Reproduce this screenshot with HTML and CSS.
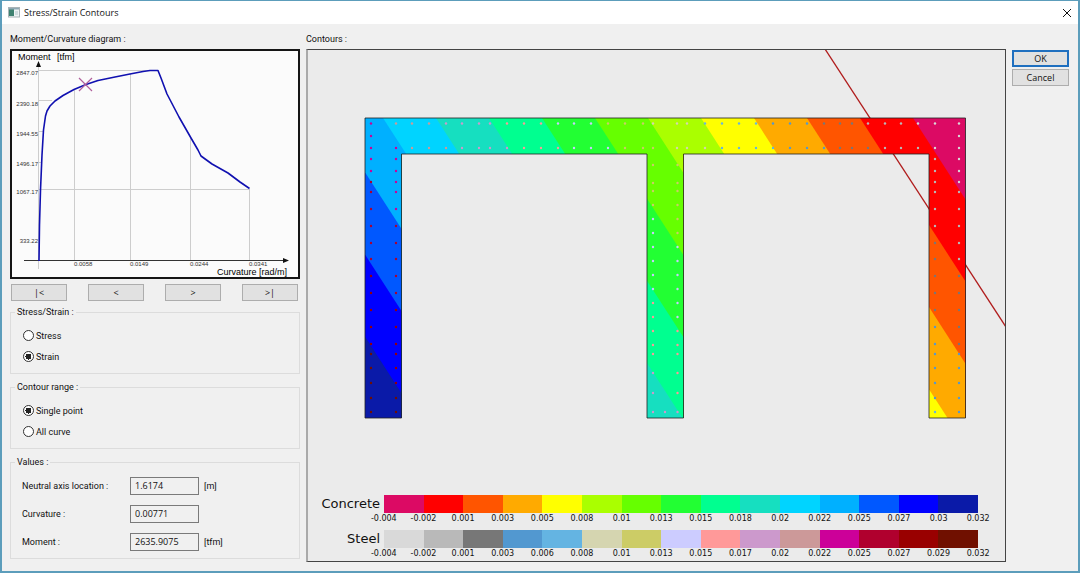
FILE: index.html
```html
<!DOCTYPE html>
<html lang="en">
<head>
<meta charset="utf-8">
<title>Stress/Strain Contours</title>
<link rel="stylesheet" href="styles.css">
</head>
<body>
<div class="window">
  <header class="titlebar">
    <svg class="app-icon" viewBox="0 0 12 11" aria-hidden="true">
      <rect x="0.5" y="0.5" width="11" height="9.5" fill="#eef3f4" stroke="#a9b4b8"/>
      <rect x="1" y="1" width="5" height="8" fill="#3f8271"/>
      <rect x="1" y="1" width="10" height="1.5" fill="#8fa9b5"/>
      <rect x="7" y="4" width="3" height="4" fill="#cfdcdf"/>
    </svg>
    <h1 class="title">Stress/Strain Contours</h1>
    <button class="close" type="button" aria-label="Close">
      <svg viewBox="0 0 10 10" aria-hidden="true"><path d="M1 1L9 9M9 1L1 9" stroke="#111" fill="none"/></svg>
    </button>
  </header>

  <main class="content">
    <section class="side">
      <h2 class="caption">Moment/Curvature diagram :</h2>
      <div class="chart">
        <svg viewBox="12 51 286 226" role="img" aria-label="Moment curvature diagram">
          <g stroke="#cdcdcd" fill="none">
            <path d="M38.5 70.5H158M38.5 100.5H52M38.5 131.5H43M38.5 162.5H41M38.5 189.5H249.5"/>
            <path d="M74.5 89V261M130.5 74V261M190.5 137V261M249.5 189V261M38.5 64V269"/>
          </g>
          <path d="M24 260.5H284" stroke="#333" fill="none"/>
          <path d="M36 67L38.500 61L41 67ZM283 258L289 260.500L283 263Z" fill="#111"/>
          <path class="curve" d="M39 261L39.500 225L40.500 190L42 155L43.500 130L45.500 116L47 111L50 106L55 101L63 95.500L74 89.500L86 84.500L98 80.500L115 77L130 74L143 71.500L150 70.500L158 70.500L161 78L167 94L179 117L191 138L198 150L201 156L212 164L228 173L240 182L249.500 188.500"/>
          <path class="marker" d="M79 78L92 91M92 78L79 91"/>
          <g class="axis-name">
            <text x="18" y="60">Moment</text>
            <text x="57" y="60">[tfm]</text>
            <text x="287" y="275" text-anchor="end">Curvature [rad/m]</text>
          </g>
          <g class="tick" text-anchor="end">
            <text x="38" y="75">2847.07</text>
            <text x="38" y="106">2390.18</text>
            <text x="38" y="136">1944.55</text>
            <text x="38" y="166">1496.17</text>
            <text x="38" y="194">1067.17</text>
            <text x="38" y="243">333.22</text>
          </g>
          <g class="tick">
            <text x="74" y="266">0.0058</text>
            <text x="130" y="266">0.0149</text>
            <text x="190" y="266">0.0244</text>
            <text x="249" y="266">0.0341</text>
          </g>
        </svg>
      </div>
      <nav class="steps">
        <button class="btn" type="button">|&lt;</button>
        <button class="btn" type="button">&lt;</button>
        <button class="btn" type="button">&gt;</button>
        <button class="btn" type="button">&gt;|</button>
      </nav>

      <fieldset class="group">
        <legend>Stress/Strain :</legend>
        <label class="choice"><input type="radio" name="kind">Stress</label>
        <label class="choice"><input type="radio" name="kind" checked>Strain</label>
      </fieldset>
      <fieldset class="group">
        <legend>Contour range :</legend>
        <label class="choice"><input type="radio" name="range" checked>Single point</label>
        <label class="choice"><input type="radio" name="range">All curve</label>
      </fieldset>
      <fieldset class="group values">
        <legend>Values :</legend>
        <div class="field"><label for="axis">Neutral axis location :</label><input id="axis" type="text" value="1.6174" readonly><span>[m]</span></div>
        <div class="field"><label for="curv">Curvature :</label><input id="curv" type="text" value="0.00771" readonly></div>
        <div class="field"><label for="moment">Moment :</label><input id="moment" type="text" value="2635.9075" readonly><span>[tfm]</span></div>
      </fieldset>
    </section>

    <section class="contours">
      <h2 class="caption">Contours :</h2>
      <div class="view">
        <svg class="section" viewBox="308 50 697 440" role="img" aria-label="Strain contours of the section">
          <defs>
            <clipPath id="shape"><path d="M365 118H965.500V418H929V154H683.500V418H647V154H401.500V418H365Z"/></clipPath>
          </defs>
          <path d="M825 49L1006 327" stroke="#b01c1c" stroke-width="1.300" fill="none"/>
          <g id="bands" clip-path="url(#shape)"></g>
          <g id="bars"></g>
          <path d="M365 118H965.500V418H929V154H683.500V418H647V154H401.500V418H365Z" fill="none" stroke="#222" stroke-opacity=".8"/>
        </svg>
        <div class="scales" id="scales"></div>
      </div>
    </section>

    <aside class="actions">
      <button class="btn primary" type="button">OK</button>
      <button class="btn" type="button">Cancel</button>
    </aside>
  </main>
</div>
<script src="app.js"></script>
</body>
</html>
```
FILE: styles.css
```css
* { box-sizing: border-box; }
body {
  margin: 0;
  padding: 1px 2px 2px;
  background: #5c9dbb;
  color: #111;
  font-family: "Open Sans", "Noto Sans", sans-serif;
  font-size: 9px;
  line-height: 12px;
}
button, input { font: inherit; color: inherit; }
.window {
  min-height: calc(100vh - 3px);
  background: #f0f0f0;
  display: flex;
  flex-direction: column;
}
.titlebar {
  height: 23px;
  padding: 0 6px;
  background: #fff;
  display: flex;
  align-items: center;
  gap: 4px;
}
.app-icon { width: 12px; height: 11px; }
.title { flex: 1; margin: 0; font-size: 9px; font-weight: 400; }
.close { border: 0; background: none; padding: 0; width: 10px; height: 10px; display: flex; }
.close svg { width: 100%; }
.content {
  flex: 1;
  display: grid;
  grid-template-columns: 290px minmax(0, 1fr) 57px;
  gap: 6px;
  padding: 9px 9px 9px 8px;
}
.side, .contours { display: flex; flex-direction: column; }
.caption, .group { font-family: Roboto, "Open Sans", sans-serif; }
.caption { margin: 0 0 4px; font-size: 9px; font-weight: 400; line-height: 12px; }
.chart { border: 2px solid #151515; background: #fbfbfb; }
.chart svg { display: block; width: 100%; font-family: "Liberation Sans", Arial, sans-serif; }
.curve { fill: none; stroke: #1010b0; stroke-width: 1.6; stroke-linejoin: round; }
.marker { fill: none; stroke: #b0609c; stroke-width: 1.2; }
.axis-name { font-size: 9px; }
.tick { font-size: 6px; fill: #333; }
.steps { display: flex; justify-content: space-between; padding: 5px 2px 5px 1px; }
.btn {
  width: 56px;
  height: 17px;
  padding: 0;
  border: 1px solid #adadad;
  background: #e1e1e1;
  line-height: 14px;
}
.group {
  margin: 0 0 7px;
  padding: 7px 11px 6px;
  border: 1px solid #dcdcdc;
  min-width: 0;
}
.group legend { margin-left: -7px; padding: 0 2px; line-height: 12px; }
.choice { display: flex; align-items: center; gap: 2px; height: 21px; margin-left: 1px; }
.choice input {
  appearance: none;
  width: 11px;
  height: 11px;
  margin: 0;
  border: 1px solid #333;
  border-radius: 50%;
  background: #fff;
}
.choice input:checked { background: radial-gradient(circle, #222 0 3px, #fff 3px); }
.values { margin: 0; padding: 9px 11px 7px; }
.field { display: grid; grid-template-columns: 108px 69px 1fr; align-items: center; height: 18px; margin-bottom: 10px; }
.field:last-child { margin-bottom: 0; }
.field span { padding-left: 5px; }
.field input {
  width: 100%;
  height: 18px;
  padding: 0 4px 2px;
  border: 1px solid #7a7a7a;
  background: #f0f0f0;
  font-family: "Open Sans", sans-serif;
}
.view {
  flex: 1;
  display: flex;
  flex-direction: column;
  justify-content: space-between;
  border: 1px solid #444;
  border-left: 2px solid #aaa;
  background: #ebebeb;
}
.section { display: block; width: 100%; }
.scales {
  display: grid;
  gap: 6px;
  padding: 0 27px 2px 12px;
  margin-top: -8px;
  font-family: "DejaVu Sans", Verdana, sans-serif;
}
.scale { display: grid; grid-template-columns: 64px 1fr; }
.scale-name { padding-right: 4px; font-size: 13px; line-height: 18px; text-align: right; }
.swatches { display: flex; height: 18px; }
.swatches span { flex: 1; }
.marks { grid-column: 2; display: flex; margin: 0 -20px; font-size: 8px; line-height: 11px; }
.marks span { flex: 1; text-align: center; }
.actions { display: flex; flex-direction: column; gap: 2px; padding: 17px 0 0; }
.actions .btn { width: 100%; }
.primary { border: 2px solid #1f6fbf; }
```
FILE: app.js
```js
const concrete = {
  name: "Concrete",
  colors: ["#dc0a64", "#ff0000", "#ff5500", "#ffaa00", "#ffff00", "#aaff00", "#66ff00", "#22ff33",
    "#00ff90", "#16dfc0", "#00d4ff", "#00b0ff", "#0058ff", "#0000ff", "#0a1aa8"],
  marks: ["-0.004", "-0.002", "0.001", "0.003", "0.005", "0.008", "0.01", "0.013", "0.015", "0.018",
    "0.02", "0.022", "0.025", "0.027", "0.03", "0.032"]
};
const steel = {
  name: "Steel",
  colors: ["#d9d9d9", "#b9b9b9", "#777777", "#5298d0", "#64b4e2", "#d5d5b0", "#cccc66", "#ccccff",
    "#ff9999", "#cc99cc", "#cc9999", "#cc0099", "#b0002e", "#990000", "#701000"],
  marks: ["-0.004", "-0.002", "0.001", "0.003", "0.006", "0.008", "0.01", "0.013", "0.015", "0.017",
    "0.02", "0.022", "0.025", "0.027", "0.029", "0.032"]
};

const STEP = 53, SLOPE = 1.55, TOP = 118, HEIGHT = 300, RIGHT = 966;
const svg = (tag, attrs, parent) => {
  const node = document.createElementNS("http://www.w3.org/2000/svg", tag);
  for (const key in attrs) node.setAttribute(key, attrs[key]);
  parent.appendChild(node);
};

// Diagonal strain bands, right to left; each one overlaps those to its right.
const run = HEIGHT / SLOPE;
const bands = document.getElementById("bands");
concrete.colors.forEach((color, i) => {
  const x = i === 0 ? 1000 : RIGHT - i * STEP;
  svg("path", { d: `M0 ${TOP}H${x}L${x + run} ${TOP + HEIGHT}H0Z`, fill: color }, bands);
});

// Reinforcement bars, coloured by the steel scale.
const bars = document.getElementById("bars");
const bar = (x, y) => {
  const top = x - (y - TOP) / SLOPE;
  const i = Math.min(14, Math.max(0, Math.floor((RIGHT - top) / STEP)));
  svg("circle", { cx: x, cy: y, r: 1.2, fill: steel.colors[i] }, bars);
};
const beam = [396, 412, 429, 446, 462, 479, 490, 507, 524, 541, 558, 574, 591, 608, 625, 643, 653,
  677, 687, 705, 722, 739, 756, 773, 790, 807, 824, 840, 852, 868, 885, 901, 918, 935];
beam.forEach(x => { bar(x, 123.5); bar(x, 148); });
[371, 959].forEach(x => [123.5, 136, 148].forEach(y => bar(x, y)));
const leg = [159, 171, 182, 192, 209, 226, 243, 259, 276, 293, 310, 327, 344, 354, 368, 383, 398, 412];
[371, 396, 935, 959].forEach(x => leg.forEach(y => bar(x, y)));
const mid = [165, 183, 191, 205, 219, 233, 247, 261, 275, 289, 303, 317, 331, 345, 354, 373, 393, 412];
[653, 677.5].forEach(x => mid.forEach(y => bar(x, y)));
bar(665, 412);

document.getElementById("scales").innerHTML = [concrete, steel].map(s => `
  <div class="scale">
    <div class="scale-name">${s.name}</div>
    <div class="swatches">${s.colors.map(c => `<span style="background:${c}"></span>`).join("")}</div>
    <div class="marks">${s.marks.map(m => `<span>${m}</span>`).join("")}</div>
  </div>`).join("");
```
